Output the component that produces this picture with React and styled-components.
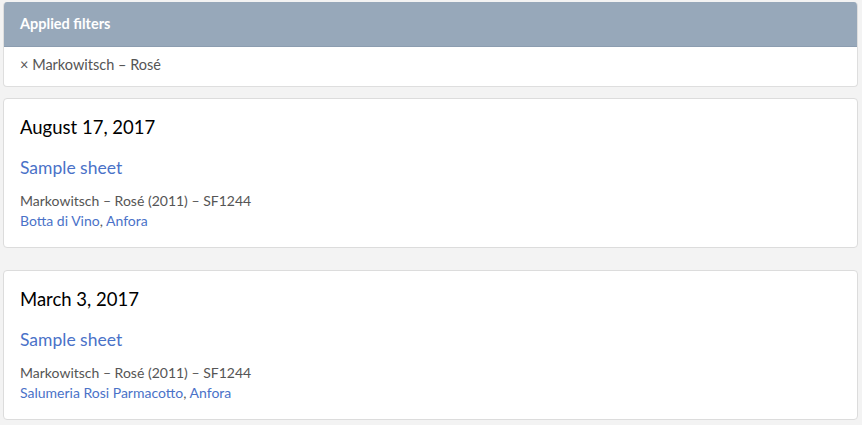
import styled, { createGlobalStyle } from "styled-components";

const GlobalStyle = createGlobalStyle`
    html, body {
        margin: 0;
        padding: 0;
        background: #f3f3f3;
        font-family: Lato, "Noto Sans", sans-serif;
    }
`;

const results = [
    {
        date: "August 17, 2017",
        title: "Sample sheet",
        wine: "Markowitsch – Rosé (2011) – SF1244",
        places: ["Botta di Vino", "Anfora"],
    },
    {
        date: "March 3, 2017",
        title: "Sample sheet",
        wine: "Markowitsch – Rosé (2011) – SF1244",
        places: ["Salumeria Rosi Parmacotto", "Anfora"],
    },
];

const App = () => {
    return (
        <Page>
            <GlobalStyle />
            <FilterPanel>
                <FilterHeader>Applied filters</FilterHeader>
                <FilterBody>
                    <span>×</span> Markowitsch – Rosé
                </FilterBody>
            </FilterPanel>
            <List>
                {results.map((r, i) => (
                    <Card key={i}>
                        <DateTitle>{r.date}</DateTitle>
                        <SheetLink href="#">{r.title}</SheetLink>
                        <Meta>{r.wine}</Meta>
                        <Places>
                            {r.places.map((p, j) => (
                                <span key={p}>
                                    <a href="#">{p}</a>
                                    {j < r.places.length - 1 && ", "}
                                </span>
                            ))}
                        </Places>
                    </Card>
                ))}
            </List>
        </Page>
    );
};

const Page = styled.div`
    padding: 2px 4px 0 3px;
`;

const FilterPanel = styled.div`
    background: #fff;
    border: 1px solid #dedede;
    border-top: none;
    border-radius: 4px;
    overflow: hidden;
`;

const FilterHeader = styled.div`
    background: #97a8ba;
    color: #fff;
    font-weight: 700;
    font-size: 14.5px;
    height: 44px;
    line-height: 44px;
    padding: 0 16px;
    border-bottom: 1px solid #8c9db0;
`;

const FilterBody = styled.div`
    color: #555;
    font-size: 14.5px;
    height: 39px;
    line-height: 36px;
    padding: 0 16px;
`;

const List = styled.div`
    display: flex;
    flex-direction: column;
    gap: 22px;
    margin-top: 11px;
`;

const Card = styled.div`
    background: #fff;
    border: 1px solid #dcdcdc;
    border-radius: 4px;
    padding: 16px 16px 17px;
    display: flex;
    flex-direction: column;
    height: 150px;
    box-sizing: border-box;
`;

const DateTitle = styled.div`
    color: #000;
    font-size: 18.5px;
    line-height: 24px;
`;

const SheetLink = styled.a`
    color: #4a72c8;
    font-size: 17.5px;
    line-height: 22px;
    text-decoration: none;
    margin-top: 18px;
`;

const Meta = styled.div`
    color: #555;
    font-size: 14px;
    line-height: 20px;
    margin-top: 12px;
`;

const Places = styled.div`
    color: #555;
    font-size: 14px;
    line-height: 20px;
    a {
        color: #4a72c8;
        text-decoration: none;
    }
`;

export default App;
